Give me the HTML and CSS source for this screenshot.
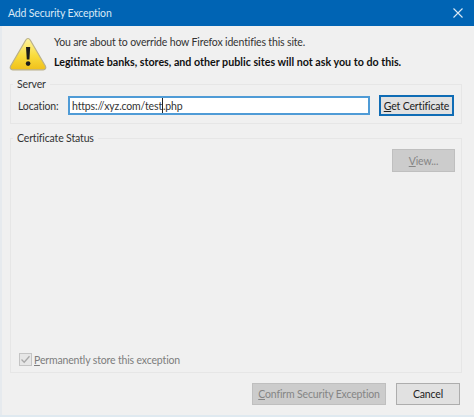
FILE: index.html
```html
<!DOCTYPE html>
<html lang="en">
  <head>
    <meta charset="UTF-8" />
    <title>Add Security Exception</title>
    <link rel="stylesheet" href="styles.css">
  </head>
  <body>
    <div class="dialog">
      <div class="titlebar">
        <span class="title">Add Security Exception</span>
        <svg class="close" width="10" height="10" viewBox="0 0 10 10">
          <path d="M0.5 0.5 L9.5 9.5 M9.5 0.5 L0.5 9.5" stroke="#dbe9f5" stroke-width="1.1" fill="none" />
        </svg>
      </div>

      <div class="content">
        <div class="intro">
          <svg class="warning" width="38" height="34" viewBox="0 0 38 34">
            <defs>
              <linearGradient id="warnFill" x1="0" y1="0" x2="0" y2="1">
                <stop offset="0" stop-color="#fdf3a0" />
                <stop offset="0.55" stop-color="#f9dc3c" />
                <stop offset="1" stop-color="#f0c01a" />
              </linearGradient>
            </defs>
            <path d="M19 1.5 C20 1.5 20.6 2 21.2 3 L36.4 29 C37.4 31 36.4 32.8 34.2 32.8 L3.8 32.8 C1.6 32.8 0.6 31 1.6 29 L16.8 3 C17.4 2 18 1.5 19 1.5 Z" fill="url(#warnFill)" stroke="#b9b08a" stroke-width="1.2" />
            <path d="M17 10 H21.2 L20.4 22.5 H17.8 Z" fill="#1c1c1c" />
            <circle cx="19.1" cy="26.6" r="2.3" fill="#1c1c1c" />
          </svg>
          <div class="messages">
            <p>You are about to override how Firefox identifies this site.</p>
            <p class="strong">Legitimate banks, stores, and other public sites will not ask you to do this.</p>
          </div>
        </div>

        <fieldset class="group server">
          <legend>Server</legend>
          <label class="location-label" for="location">Location:</label>
          <div class="location-input">
            <span>https://xyz.com/test</span><span class="caret"></span><span>.php</span>
          </div>
          <button class="btn focused"><u>G</u>et Certificate</button>
        </fieldset>

        <fieldset class="group status">
          <legend>Certificate Status</legend>
          <div class="view-row">
            <button class="btn disabled view"><u>V</u>iew...</button>
          </div>
          <div class="store-row">
            <svg class="checkbox" width="13" height="13" viewBox="0 0 13 13">
              <rect x="0.5" y="0.5" width="12" height="12" fill="#e6e6e6" stroke="#c4c4c4" />
              <path d="M2.5 6.5 L5.2 9.3 L10.5 3.2" stroke="#a8a8a8" stroke-width="1.3" fill="none" />
            </svg>
            <span class="store-label"><u>P</u>ermanently store this exception</span>
          </div>
        </fieldset>

        <div class="actions">
          <button class="btn disabled confirm"><u>C</u>onfirm Security Exception</button>
          <button class="btn cancel">Cancel</button>
        </div>
      </div>
    </div>
  </body>
</html>
```

FILE: styles.css
```css
html,
body {
  margin: 0;
  padding: 0;
  height: 100%;
}
body {
  font-family: "Lato", "Open Sans", sans-serif;
  font-size: 10.5px;
  letter-spacing: -0.15px;
  color: #333;
  background-color: #f0f0f0;
  overflow: hidden;
}
.dialog {
  display: flex;
  flex-direction: column;
  width: 474px;
  height: 417px;
  box-sizing: border-box;
  border-bottom: 2px solid #dfe9f0;
}
.titlebar {
  display: flex;
  align-items: center;
  justify-content: space-between;
  height: 26px;
  padding: 0 11px 0 8px;
  background-color: #0064b4;
  color: #d8e8f6;
  flex: none;
}
.content {
  display: flex;
  flex-direction: column;
  flex: 1;
  padding: 0 12px 0 8px;
  border-left: 2px solid #e6eaee;
  box-sizing: border-box;
}
.intro {
  display: flex;
  height: 50px;
  box-sizing: border-box;
  padding-top: 11px;
  flex: none;
}
.warning {
  flex: none;
  margin-left: -1px;
}
.messages {
  margin-left: 7px;
  margin-top: -4px;
}
.messages p {
  margin: 0;
  line-height: 19px;
  white-space: nowrap;
}
.messages .strong {
  font-size: 10.7px;
  font-weight: bold;
  letter-spacing: 0;
  color: #111;
}
.group {
  margin: 0;
  padding: 0;
  border: 1px solid #e6e6e6;
  min-width: 0;
}
.group legend {
  margin-left: -5px;
  padding: 0 4px;
  line-height: 16px;
}
.server {
  display: flex;
  align-items: center;
  height: 48px;
  box-sizing: border-box;
  padding: 3px 7px 0;
  flex: none;
}
.location-label {
  width: 50px;
  flex: none;
}
.location-input {
  display: flex;
  align-items: center;
  width: 302px;
  height: 19px;
  box-sizing: border-box;
  padding-left: 2px;
  background: #fff;
  border: 2px solid #4f9bd6;
  flex: none;
}
.caret {
  width: 1px;
  height: 15px;
  background: #222;
}
.btn {
  font-family: inherit;
  font-size: 10.5px;
  letter-spacing: -0.15px;
  padding: 0;
  white-space: nowrap;
  background: #e1e1e1;
  border: 1px solid #adadad;
  color: #222;
}
.focused {
  width: 75px;
  height: 21px;
  margin-left: 9px;
  border: 2px solid #0f6cb5;
  flex: none;
}
.disabled {
  background: #cccccc;
  border-color: #bfbfbf;
  color: #858585;
}
.status {
  height: 243px;
  box-sizing: border-box;
  margin-top: 6px;
  padding: 3px 6px 5px 7px;
  flex: none;
}
.view-row {
  display: flex;
  justify-content: flex-end;
  align-items: flex-start;
  height: 203px;
}
.view {
  width: 63px;
  height: 23px;
}
.store-row {
  display: flex;
  align-items: center;
  gap: 2px;
  height: 15px;
}
.checkbox {
  flex: none;
  margin-left: 1px;
}
.store-label {
  color: #7d7d7d;
}
.actions {
  display: flex;
  justify-content: flex-end;
  gap: 10px;
  margin-top: 10px;
  padding-right: 2px;
}
.confirm {
  width: 134px;
  height: 22px;
}
.cancel {
  width: 64px;
  height: 22px;
}
```
